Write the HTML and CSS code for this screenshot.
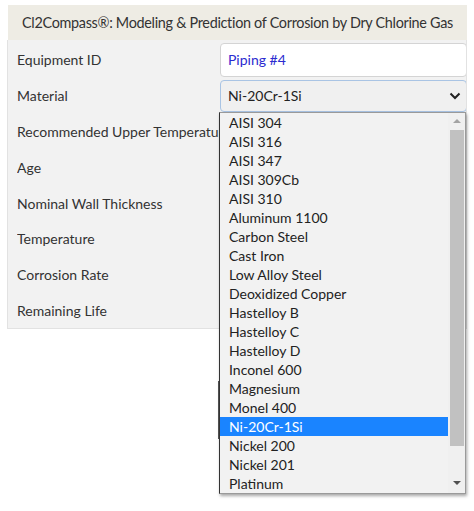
FILE: index.html
```html
<!DOCTYPE html>
<html>
<head>
<meta charset="utf-8">
<link rel="stylesheet" href="styles.css">
</head>
<body>
<div class="card">
  <div class="header">Cl2Compass®: Modeling &amp; Prediction of Corrosion by Dry Chlorine Gas</div>
  <div class="body">
    <div class="row"><span class="label">Equipment ID</span><div class="input">Piping #4</div></div>
    <div class="row"><span class="label">Material</span><div class="select">Ni-20Cr-1Si<svg class="chev" width="12" height="8" viewBox="0 0 12 8"><path d="M1.5 1.5 L6 6 L10.5 1.5" fill="none" stroke="#222" stroke-width="2"/></svg></div></div>
    <div class="row"><span class="label">Recommended Upper Temperature</span></div>
    <div class="row"><span class="label">Age</span></div>
    <div class="row"><span class="label">Nominal Wall Thickness</span></div>
    <div class="row"><span class="label">Temperature</span></div>
    <div class="row"><span class="label">Corrosion Rate</span></div>
    <div class="row"><span class="label">Remaining Life</span></div>
  </div>
</div>
<div class="below"><div class="btnbox"></div></div>
<div class="dropdown">
  <div class="list">
    <div class="opt">AISI 304</div>
    <div class="opt">AISI 316</div>
    <div class="opt">AISI 347</div>
    <div class="opt">AISI 309Cb</div>
    <div class="opt">AISI 310</div>
    <div class="opt">Aluminum 1100</div>
    <div class="opt">Carbon Steel</div>
    <div class="opt">Cast Iron</div>
    <div class="opt">Low Alloy Steel</div>
    <div class="opt">Deoxidized Copper</div>
    <div class="opt">Hastelloy B</div>
    <div class="opt">Hastelloy C</div>
    <div class="opt">Hastelloy D</div>
    <div class="opt">Inconel 600</div>
    <div class="opt">Magnesium</div>
    <div class="opt">Monel 400</div>
    <div class="opt sel">Ni-20Cr-1Si</div>
    <div class="opt">Nickel 200</div>
    <div class="opt">Nickel 201</div>
    <div class="opt">Platinum</div>
  </div>
  <div class="scroll">
    <div class="arrow up"></div>
    <div class="thumb"></div>
    <div class="arrow down"></div>
  </div>
</div>
</body>
</html>
```
FILE: styles.css
```css
html, body { margin: 0; padding: 0; background: #fff; }
body {
  font-family: "Lato", "Open Sans", sans-serif;
  color: #333;
  width: 474px;
  height: 511px;
  overflow: hidden;
  position: relative;
}
.card { margin: 5px 0 0 7px; width: 460px; }
.header {
  height: 35px;
  margin-left: 1px;
  background: #eeece4;
  display: flex;
  align-items: center;
  justify-content: center;
  font-size: 14.4px;
  letter-spacing: -0.3px;
  white-space: nowrap;
  color: #333;
}
.body {
  background: #f2f2f2;
  border: 1px solid #e2e2e2;
  border-top: none;
  padding: 2px 0 0 9px;
  height: 286px;
}
.row {
  height: 35.8px;
  display: flex;
  align-items: center;
  font-size: 14px;
  white-space: nowrap;
  overflow: hidden;
}
.label { width: 203px; flex: none; }
.input, .select {
  width: 247px;
  box-sizing: border-box;
  flex: none;
  display: flex;
  align-items: center;
  padding-left: 7px;
  font-size: 14px;
}
.input {
  height: 34px;
  background: #fff;
  border: 1px solid #d4d4d4;
  border-radius: 4px;
  color: #2b2bd0;
}
.select {
  height: 32px;
  background: #f0f0f0;
  border: 1px solid #a9c4e4;
  border-radius: 4px;
  color: #222;
  justify-content: space-between;
  padding-right: 5px;
}
.below { padding: 52px 0 0 218px; }
.btnbox {
  width: 248px;
  height: 58px;
  border: 1px solid #555;
  box-sizing: border-box;
  background: #fff;
}
.dropdown {
  position: absolute;
  left: 219px;
  top: 112px;
  width: 247px;
  height: 382px;
  box-sizing: border-box;
  background: #f2f2f2;
  border: 1px solid #9a9a9a;
  border-left-color: #333;
  box-shadow: 1px 2px 3px rgba(0,0,0,0.35);
  display: flex;
}
.list { flex: 1; }
.opt {
  height: 19px;
  line-height: 19px;
  font-size: 14px;
  color: #222;
  padding-left: 9px;
}
.opt.sel { background: #1a84ff; color: #fff; }
.scroll {
  width: 17px;
  background: #f0f0f0;
  display: flex;
  flex-direction: column;
  align-items: center;
}
.arrow { width: 0; height: 0; border-left: 4px solid transparent; border-right: 4px solid transparent; }
.arrow.up { margin-top: 6px; border-bottom: 4px solid #a3a3a3; }
.arrow.down { margin-top: 35px; border-top: 4px solid #505050; }
.thumb { width: 14px; height: 316px; margin-top: 7px; background: #c1c1c1; }
```
